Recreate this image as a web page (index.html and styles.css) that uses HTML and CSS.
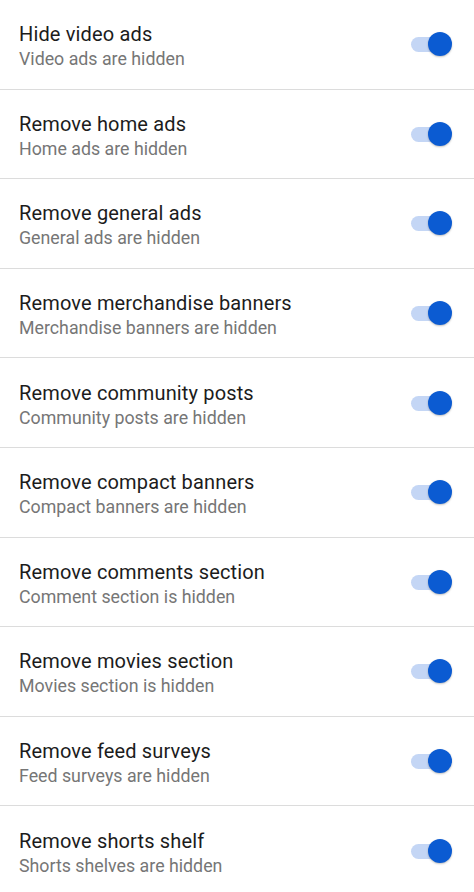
FILE: index.html
```html
<!DOCTYPE html>
<html>
<head>
<meta charset="utf-8">
<link rel="stylesheet" href="styles.css">
</head>
<body>
<div class="list">
  <div class="row"><div class="text"><div class="title">Hide video ads</div><div class="sub">Video ads are hidden</div></div><div class="switch"><span class="track"></span><span class="thumb"></span></div></div>
  <div class="row"><div class="text"><div class="title">Remove home ads</div><div class="sub">Home ads are hidden</div></div><div class="switch"><span class="track"></span><span class="thumb"></span></div></div>
  <div class="row"><div class="text"><div class="title">Remove general ads</div><div class="sub">General ads are hidden</div></div><div class="switch"><span class="track"></span><span class="thumb"></span></div></div>
  <div class="row"><div class="text"><div class="title">Remove merchandise banners</div><div class="sub">Merchandise banners are hidden</div></div><div class="switch"><span class="track"></span><span class="thumb"></span></div></div>
  <div class="row"><div class="text"><div class="title">Remove community posts</div><div class="sub">Community posts are hidden</div></div><div class="switch"><span class="track"></span><span class="thumb"></span></div></div>
  <div class="row"><div class="text"><div class="title">Remove compact banners</div><div class="sub">Compact banners are hidden</div></div><div class="switch"><span class="track"></span><span class="thumb"></span></div></div>
  <div class="row"><div class="text"><div class="title">Remove comments section</div><div class="sub">Comment section is hidden</div></div><div class="switch"><span class="track"></span><span class="thumb"></span></div></div>
  <div class="row"><div class="text"><div class="title">Remove movies section</div><div class="sub">Movies section is hidden</div></div><div class="switch"><span class="track"></span><span class="thumb"></span></div></div>
  <div class="row"><div class="text"><div class="title">Remove feed surveys</div><div class="sub">Feed surveys are hidden</div></div><div class="switch"><span class="track"></span><span class="thumb"></span></div></div>
  <div class="row"><div class="text"><div class="title">Remove shorts shelf</div><div class="sub">Shorts shelves are hidden</div></div><div class="switch"><span class="track"></span><span class="thumb"></span></div></div>
</div>
</body>
</html>
```

FILE: styles.css
```css
html, body {
  margin: 0;
  padding: 0;
  background: #ffffff;
}
body {
  font-family: Roboto, "Noto Sans", "Liberation Sans", sans-serif;
  overflow: hidden;
}
.list {
  display: flex;
  flex-direction: column;
}
.row {
  box-sizing: border-box;
  height: 89.6px;
  flex: 0 0 89.6px;
  display: flex;
  align-items: center;
  padding: 0 22px 0 19px;
  border-bottom: 1px solid #dcdcdc;
}
.text {
  flex: 1;
  padding-top: 3.8px;
}
.title {
  font-size: 20px;
  line-height: 26px;
  letter-spacing: 0.15px;
  color: #1c1c1c;
}
.sub {
  font-size: 17.8px;
  line-height: 24px;
  color: #767676;
}
.switch {
  position: relative;
  width: 41px;
  height: 24px;
  flex: 0 0 41px;
}
.track {
  position: absolute;
  left: 0;
  top: 5px;
  width: 36px;
  height: 15px;
  border-radius: 8px;
  background: #c4d6f5;
}
.thumb {
  position: absolute;
  right: 0;
  top: 0;
  width: 24px;
  height: 24px;
  border-radius: 50%;
  background: #0b5bd2;
  box-shadow: 0 1px 2px rgba(0,0,0,0.25);
}
```
